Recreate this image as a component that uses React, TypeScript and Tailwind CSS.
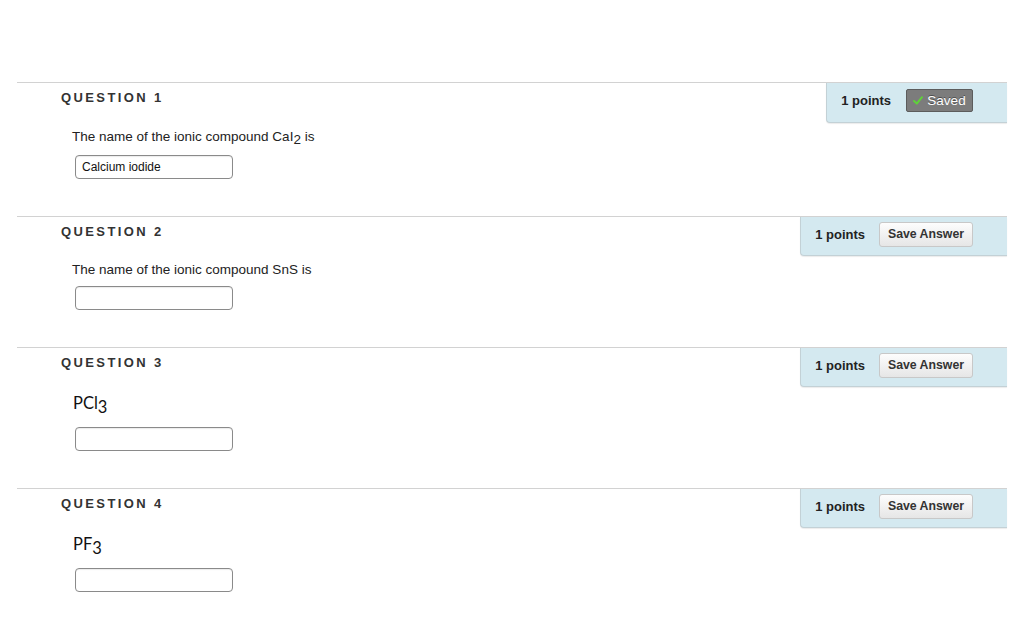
import React from "react";

const sans = { fontFamily: '"Liberation Sans", Arial, sans-serif' };

function Check() {
  return (
    <svg width="10" height="9" viewBox="0 0 10 9" className="mr-[4px]">
      <path d="M1 5 L3.8 7.6 L9 1.2" stroke="#5fd13a" strokeWidth="2" fill="none" strokeLinecap="round" strokeLinejoin="round" />
    </svg>
  );
}

function PointsBox({ saved }: { saved?: boolean }) {
  return (
    <div className="flex items-start bg-[#d4e9f0] border-l border-b border-[#c3d1d6] rounded-bl-[4px] shadow-[0_1px_1px_rgba(0,0,0,0.08)] pl-[14px] pr-[34px]">
      {saved ? (
        <div className="flex items-center pt-[6px] pb-[10px] gap-[15px]">
          <span className="text-[13px] font-bold text-[#222] leading-[16px]">1 points</span>
          <div className="flex items-center justify-center h-[23px] w-[67px] bg-[#7c7c7c] border border-[#5c5c5c] rounded-[2px] text-white text-[13.5px] leading-none [text-shadow:0_-1px_0_rgba(0,0,0,0.4)]">
            <Check />
            Saved
          </div>
        </div>
      ) : (
        <div className="flex items-center pt-[5px] pb-[8px] gap-[14px]">
          <span className="text-[13px] font-bold text-[#222] leading-[16px]">1 points</span>
          <div className="flex items-center justify-center h-[25px] w-[94px] bg-gradient-to-b from-[#fdfdfd] to-[#e6e6e6] border border-[#c8c8c8] rounded-[3px] text-[#333] text-[12.3px] font-bold leading-none">
            Save Answer
          </div>
        </div>
      )}
    </div>
  );
}

function Input({ value }: { value?: string }) {
  return (
    <div className="ml-[58px] w-[158px] h-[24px] border border-[#8a8a8a] rounded-[4px] bg-white flex items-center px-[6px] text-[12px] text-[#111] shadow-[inset_0_1px_1px_rgba(0,0,0,0.08)]">
      {value}
    </div>
  );
}

function Section({
  n,
  saved,
  children,
}: {
  n: number;
  saved?: boolean;
  children: React.ReactNode;
}) {
  return (
    <div className="flex border-t border-[#d2d2d2]">
      <div className="flex-1 pt-[7px] pb-[37px]">
        <div className="pl-[44px] text-[13px] font-bold tracking-[2.4px] leading-[16px] text-[#333]">
          QUESTION {n}
        </div>
        {children}
      </div>
      <div className="self-start">
        <PointsBox saved={saved} />
      </div>
    </div>
  );
}

export default function App() {
  return (
    <div className="w-[1024px] h-[626px] bg-white" style={sans}>
      <div className="pt-[82px] ml-[17px] w-[990px]">
        <Section n={1} saved>
          <div className="mt-[23px] pl-[55px] text-[13.5px] leading-[16px] text-[#222]">
            The name of the ionic compound CaI
            <span className="relative top-[3px] text-[13.5px] leading-none">2</span> is
          </div>
          <div className="mt-[10px]">
            <Input value="Calcium iodide" />
          </div>
        </Section>
        <Section n={2}>
          <div className="mt-[22px] pl-[55px] text-[13.5px] leading-[16px] text-[#222]">
            The name of the ionic compound SnS is
          </div>
          <div className="mt-[8px]">
            <Input />
          </div>
        </Section>
        <Section n={3}>
          <div
            className="mt-[22px] pl-[56px] text-[16.5px] leading-[20px] text-[#111]"
            style={{ fontFamily: 'Lato, "Open Sans", sans-serif' }}
          >
            PCl<span className="relative top-[4px] text-[16.5px] leading-none">3</span>
          </div>
          <div className="mt-[14px]">
            <Input />
          </div>
        </Section>
        <Section n={4}>
          <div
            className="mt-[22px] pl-[56px] text-[16.5px] leading-[20px] text-[#111]"
            style={{ fontFamily: 'Lato, "Open Sans", sans-serif' }}
          >
            PF<span className="relative top-[4px] text-[16.5px] leading-none">3</span>
          </div>
          <div className="mt-[14px]">
            <Input />
          </div>
        </Section>
      </div>
    </div>
  );
}
